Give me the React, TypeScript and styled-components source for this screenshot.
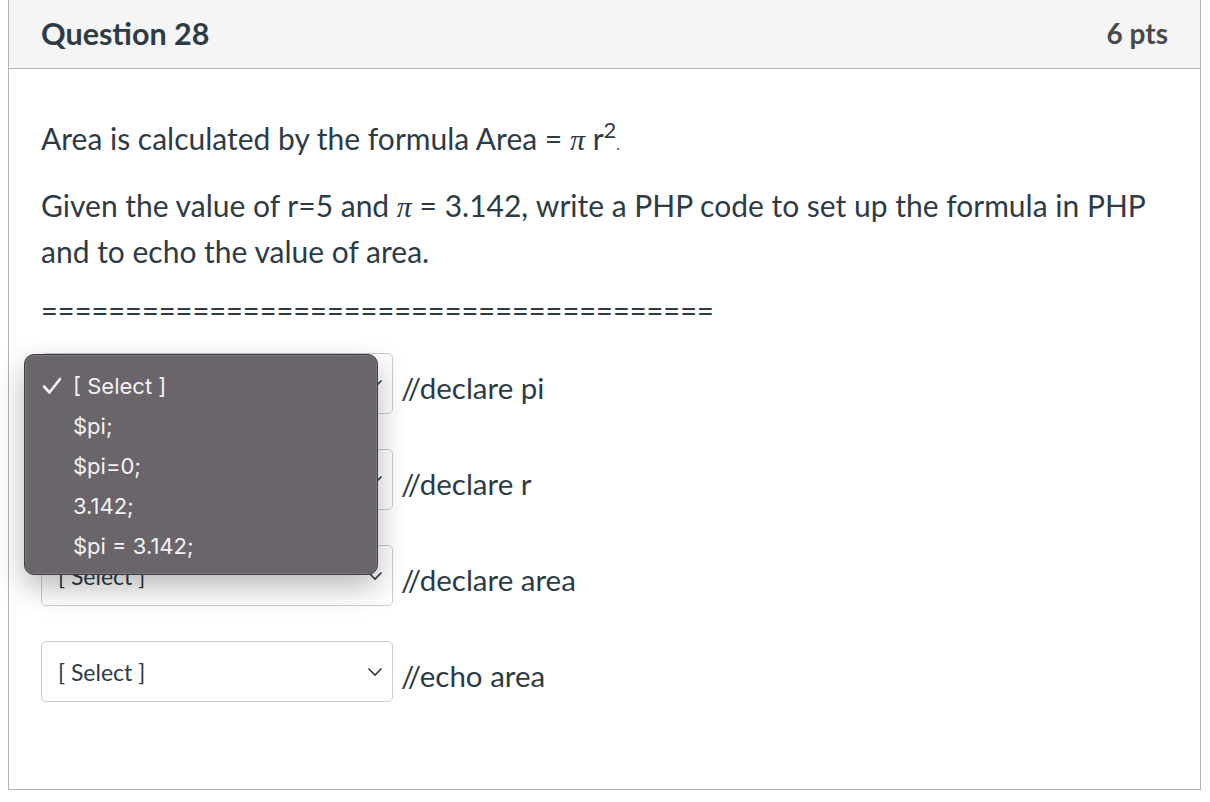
import React from "react";
import styled, { createGlobalStyle } from "styled-components";

const Global = createGlobalStyle`
  html, body { margin: 0; padding: 0; background: #fff; }
  body { font-family: Lato, "Open Sans", sans-serif; color: #2d3b45; }
`;

const Page = styled.div`
  padding: 0 9px 0 8px;
  height: 802px;
  box-sizing: border-box;
`;

const Card = styled.div`
  width: 1193px;
  box-sizing: border-box;
  border: 1px solid #b3b3b3;
  border-top: none;
  background: #fff;
`;

const Header = styled.div`
  height: 69px;
  box-sizing: border-box;
  background: #f5f5f5;
  border-bottom: 1px solid #b3b3b3;
  display: flex;
  align-items: center;
  justify-content: space-between;
  padding: 0 32px 2px 32px;
`;

const Title = styled.div`
  font-weight: 700;
  font-size: 30.5px;
  color: #2d3b45;
`;

const Points = styled.div`
  font-weight: 700;
  font-size: 28px;
  color: #4a4a4a;
`;

const Body = styled.div`
  position: relative;
  padding: 47px 32px 87px 32px;
`;

const Para = styled.p`
  margin: 0;
  font-size: 30px;
  line-height: 44px;
  & + & { margin-top: 17px; }
`;

const Pi = styled.span`
  font-family: "Liberation Serif", "DejaVu Serif", serif;
  font-style: italic;
  font-size: 30px;
`;

const Sup = styled.sup`
  font-size: 22px;
  line-height: 0;
  vertical-align: 12px;
`;

const Dot = styled.span`
  font-size: 15px;
`;

const Rule = styled.div`
  margin: 15px 0 21px;
  font-size: 29px;
  line-height: 44px;
  white-space: nowrap;
`;

const Rows = styled.div`
  display: flex;
  flex-direction: column;
  gap: 35px;
`;

const Row = styled.div`
  display: flex;
  align-items: center;
  gap: 8px;
`;

const SelectBox = styled.div`
  position: relative;
  width: 352px;
  height: 61px;
  box-sizing: border-box;
  border: 1px solid #c7cdd1;
  border-radius: 5px;
  background: #fff;
  display: flex;
  align-items: center;
  padding-left: 16px;
  font-size: 23px;
  color: #2d3b45;
`;

const Chevron = styled.svg`
  position: absolute;
  right: 9px;
  top: 50%;
  transform: translateY(-50%);
`;

const Label = styled.span`
  font-size: 29.5px;
  color: #2d3b45;
  padding-top: 8px;
`;

const Popup = styled.div`
  position: absolute;
  left: 15px;
  top: 285px;
  width: 354px;
  height: 221px;
  box-sizing: border-box;
  background: #69656a;
  border: 1px solid #3f3c40;
  border-radius: 10px;
  box-shadow: inset 0 0 0 1px rgba(255,255,255,0.12), 0 12px 30px rgba(0,0,0,0.28);
  padding: 11px 0 10px;
  font-family: Inter, Roboto, "Noto Sans", sans-serif;
  color: #f2f2f2;
`;

const Item = styled.div`
  height: 40px;
  display: flex;
  align-items: center;
  padding-left: 48px;
  position: relative;
  font-size: 22px;
  font-weight: 400;
`;

const Check = styled.svg`
  position: absolute;
  left: 17px;
  top: 50%;
  transform: translateY(-50%);
`;

const ChevronIcon = () => (
  <Chevron width="16" height="10" viewBox="0 0 16 10">
    <path d="M1.5 1.5 L8 8 L14.5 1.5" fill="none" stroke="#2d3b45" strokeWidth="1.6" />
  </Chevron>
);

const selects = ["//declare pi", "//declare r", "//declare area", "//echo area"];
const options = ["[ Select ]", "$pi;", "$pi=0;", "3.142;", "$pi = 3.142;"];

export default function App() {
  return (
    <Page>
      <Global />
      <Card>
        <Header>
          <Title>Question 28</Title>
          <Points>6 pts</Points>
        </Header>
        <Body>
          <Para>
            Area is calculated by the formula Area = <Pi>π</Pi> r<Sup>2</Sup>
            <Dot>.</Dot>
          </Para>
          <Para>
            Given the value of r=5 and <Pi>π</Pi> = 3.142, write a PHP code to set up the formula in PHP and to echo the value of area.
          </Para>
          <Rule>{"=".repeat(40)}</Rule>
          <Rows>
            {selects.map((s) => (
              <Row key={s}>
                <SelectBox>
                  [ Select ]
                  <ChevronIcon />
                </SelectBox>
                <Label>{s}</Label>
              </Row>
            ))}
          </Rows>
          <Popup>
            {options.map((o, i) => (
              <Item key={o}>
                {i === 0 && (
                  <Check width="20" height="18" viewBox="0 0 20 18">
                    <path d="M2 9.5 L7.5 15.5 L18 2" fill="none" stroke="#f2f2f2" strokeWidth="2.6" strokeLinecap="round" strokeLinejoin="round" />
                  </Check>
                )}
                {o}
              </Item>
            ))}
          </Popup>
        </Body>
      </Card>
    </Page>
  );
}
